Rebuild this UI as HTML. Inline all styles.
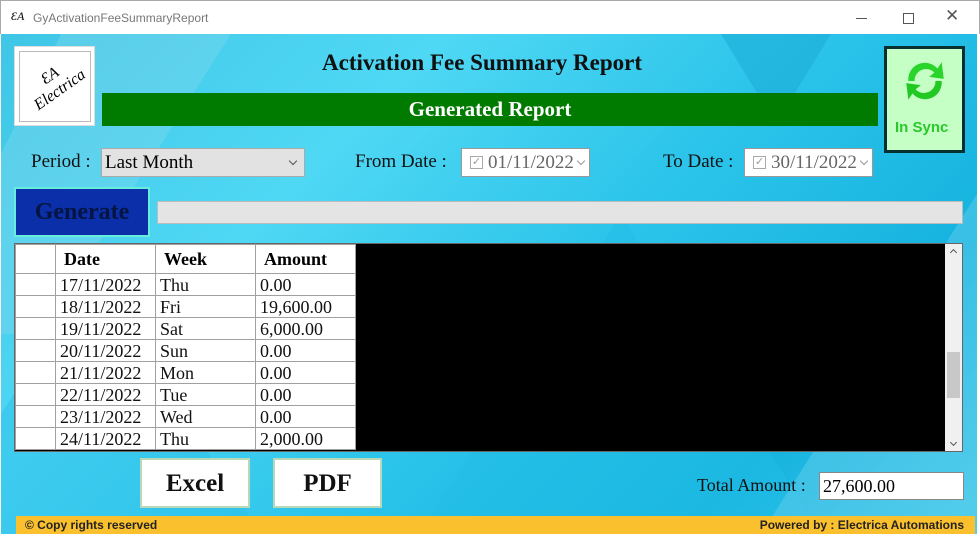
<!DOCTYPE html>
<html><head><meta charset="utf-8"><style>
*{margin:0;padding:0;box-sizing:border-box}
body{width:980px;height:536px;overflow:hidden;background:#fff;font-family:"Liberation Serif",serif;position:relative}
.a{position:absolute}
.tb{left:0;top:0;width:980px;height:34px;background:#fff;border:1px solid #aaa;border-bottom:none}
.bg{left:1px;top:34px;width:976px;height:500px;background:linear-gradient(135deg,#3fc6e6 0%,#4fd8f4 30%,#2cc4ea 55%,#15b3df 80%,#3fc9ea 100%);overflow:hidden}
.lbl{font-size:19px;color:#111}
.dt{background:#fff;border:1px solid #999;font-size:19px;color:#666;height:29px;line-height:27px;padding-left:26px}
.dt i{position:absolute;left:8px;top:7px;width:13px;height:13px;border:1px solid #aaa;font-style:normal;font-size:11px;line-height:11px;text-align:center;color:#999}
.dt b{position:absolute;right:5px;top:9px;width:6px;height:6px;border-right:1px solid #999;border-bottom:1px solid #999;transform:rotate(45deg)}
table{border-collapse:collapse;font-size:18px}
td{border:1px solid #a0a0a0;height:22px;line-height:20px;padding-left:4px;background:#fff;color:#111}
th{border:1px solid #a0a0a0;height:29px;text-align:left;padding-left:8px;background:#fff;font-size:18px}
.btn{background:#fff;border:2px solid #b8d8b8;font-weight:bold;font-size:25px;text-align:center;color:#111}
</style></head><body>
<div class="a tb">
 <span class="a" style="left:10px;top:8px;font-family:'Liberation Serif';font-style:italic;font-size:12px">ƐA</span>
 <span class="a" style="left:32px;top:10px;font-family:'Liberation Sans',sans-serif;font-size:12px;color:#777">GyActivationFeeSummaryReport</span>
 <span class="a" style="left:855px;top:17px;width:11px;height:1px;background:#555"></span>
 <span class="a" style="left:902px;top:12px;width:11px;height:11px;border:1px solid #555"></span>
 <span class="a" style="left:944px;top:5px;font-family:'Liberation Sans';font-size:17px;color:#555">✕</span>
</div>
<div class="a bg">
 <svg class="a" style="left:0;top:0" width="976" height="500">
  <polygon points="60,0 230,0 40,300 0,300 0,120" fill="#8ad9ee" opacity=".35"/>
  <polygon points="720,0 830,0 775,90" fill="#1fb0da" opacity=".7"/>
  <polygon points="420,500 620,180 820,500" fill="#22bde6" opacity=".5"/>
  <polygon points="760,500 976,160 976,500" fill="#7fd8f0" opacity=".35"/>
  <polygon points="0,380 90,240 260,500 0,500" fill="#2bc0ea" opacity=".5"/>
 </svg>
</div>
<div class="a" style="left:14px;top:46px;width:81px;height:80px;background:#fff;border:1px solid #ddd;overflow:hidden"><div class="a" style="left:4px;top:4px;width:72px;height:71px;border:1px solid #bbb"><span class="a" style="left:0;top:14px;font-style:italic;font-size:16px;transform:rotate(-35deg);line-height:17px;text-align:center;width:70px">ƐA<br>Electrica</span></div></div>
<div class="a" style="left:322px;top:50px;font-weight:bold;font-size:23px;color:#111">Activation Fee Summary Report</div>
<div class="a" style="left:102px;top:93px;width:776px;height:33px;background:#007b00;color:#fff;font-weight:bold;font-size:21px;text-align:center;line-height:33px">Generated Report</div>
<div class="a" style="left:884px;top:46px;width:81px;height:107px;background:#c6ffc6;border:3px solid #083030">
 <svg class="a" style="left:13px;top:8px" width="50" height="48" viewBox="0 0 48 44"><path d="M8 22 A16 16 0 0 1 36 10 L40 4 L42 20 L28 18 L33 14 A11 11 0 0 0 14 22 Z" fill="#2ad52a"/><path d="M40 22 A16 16 0 0 1 12 34 L8 40 L6 24 L20 26 L15 30 A11 11 0 0 0 34 22 Z" fill="#22c922"/></svg>
 <span class="a" style="left:8px;top:70px;font-family:'Liberation Sans';font-weight:bold;font-size:15px;color:#2ac82a">In Sync</span>
</div>
<div class="a lbl" style="left:31px;top:151px">Period :</div>
<div class="a" style="left:101px;top:148px;width:204px;height:29px;background:#e2e2e2;border:1px solid #aaa;font-size:19px;line-height:27px;padding-left:3px">Last Month<span class="a" style="right:8px;top:9px;width:6px;height:6px;border-right:1px solid #555;border-bottom:1px solid #555;transform:rotate(45deg)"></span></div>
<div class="a lbl" style="left:355px;top:151px">From Date :</div>
<div class="a dt" style="left:461px;top:148px;width:129px"><i>✓</i>01/11/2022<b></b></div>
<div class="a lbl" style="left:663px;top:151px">To Date :</div>
<div class="a dt" style="left:744px;top:148px;width:129px"><i>✓</i>30/11/2022<b></b></div>
<div class="a" style="left:14px;top:187px;width:136px;height:50px;background:#0a2fa8;border:2px solid #6ed;outline:1px solid #0a2fa8;outline-offset:-4px;color:#051440;font-weight:bold;font-size:24px;text-align:center;line-height:46px">Generate</div>
<div class="a" style="left:157px;top:201px;width:806px;height:23px;background:#e4e4e4;border:1px solid #bbb"></div>
<div class="a" style="left:14px;top:243px;width:949px;height:209px;background:#000;border:1px solid #666;overflow:hidden">
 <table class="a" style="left:0;top:0;width:341px">
  <tr><th style="width:40px"></th><th style="width:100px">Date</th><th style="width:100px">Week</th><th style="width:100px">Amount</th></tr>
  <tr><td></td><td>17/11/2022</td><td>Thu</td><td>0.00</td></tr>
  <tr><td></td><td>18/11/2022</td><td>Fri</td><td>19,600.00</td></tr>
  <tr><td></td><td>19/11/2022</td><td>Sat</td><td>6,000.00</td></tr>
  <tr><td></td><td>20/11/2022</td><td>Sun</td><td>0.00</td></tr>
  <tr><td></td><td>21/11/2022</td><td>Mon</td><td>0.00</td></tr>
  <tr><td></td><td>22/11/2022</td><td>Tue</td><td>0.00</td></tr>
  <tr><td></td><td>23/11/2022</td><td>Wed</td><td>0.00</td></tr>
  <tr><td></td><td>24/11/2022</td><td>Thu</td><td>2,000.00</td></tr>
 </table>
 <div class="a" style="right:0;top:0;width:17px;height:207px;background:#f0f0f0">
  <span class="a" style="left:6px;top:6px;width:5px;height:5px;border-left:1px solid #555;border-top:1px solid #555;transform:rotate(45deg)"></span>
  <div class="a" style="left:2px;top:108px;width:13px;height:46px;background:#c8c8c8"></div>
  <span class="a" style="left:6px;top:196px;width:5px;height:5px;border-right:1px solid #555;border-bottom:1px solid #555;transform:rotate(45deg)"></span>
 </div>
</div>
<div class="a btn" style="left:140px;top:458px;width:110px;height:50px;line-height:48px">Excel</div>
<div class="a btn" style="left:273px;top:458px;width:109px;height:50px;line-height:48px">PDF</div>
<div class="a lbl" style="left:697px;top:475px;font-size:18px">Total Amount :</div>
<div class="a" style="left:819px;top:472px;width:145px;height:28px;background:#fff;border:1px solid #888;font-size:18px;line-height:26px;padding-left:3px">27,600.00</div>
<div class="a" style="left:16px;top:516px;width:959px;height:18px;background:#fbc02d;font-family:'Liberation Sans',sans-serif;font-weight:bold;font-size:12px;line-height:18px;color:#222">
 <span class="a" style="left:9px">© Copy rights reserved</span>
 <span class="a" style="right:11px">Powered by : Electrica Automations</span>
</div>
</body></html>
